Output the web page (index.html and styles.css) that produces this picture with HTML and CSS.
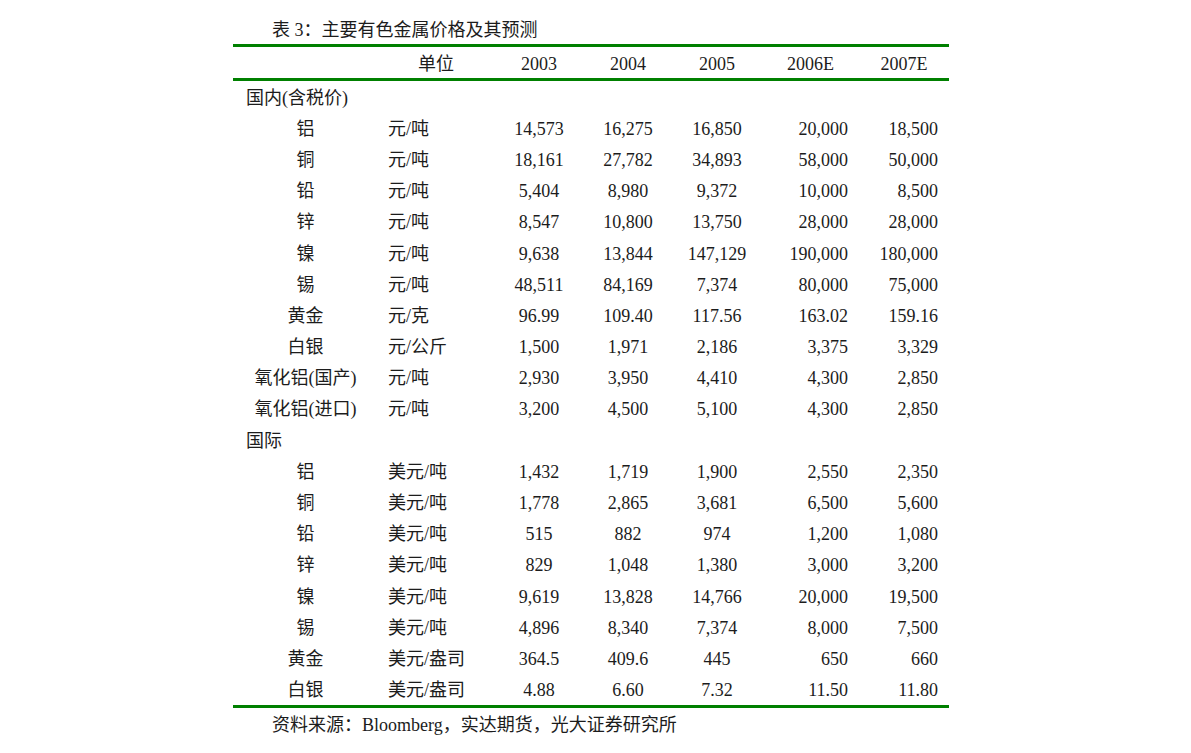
FILE: index.html
```html
<!DOCTYPE html>
<html lang="zh-CN">
<head>
<meta charset="utf-8">
<title>表 3：主要有色金属价格及其预测</title>
<link rel="stylesheet" href="styles.css">
</head>
<body>
<div class="page">
  <div class="caption">表 3：主要有色金属价格及其预测</div>
  <div class="table">
    <div class="row head">
      <div class="c name"></div>
      <div class="c unit-h">单位</div>
      <div class="c yr">2003</div>
      <div class="c yr">2004</div>
      <div class="c yr">2005</div>
      <div class="c yr">2006E</div>
      <div class="c yr">2007E</div>
    </div>
    <div class="row section"><div class="sec">国内(含税价)</div></div>
    <div class="row"><div class="c name">铝</div><div class="c unit">元/吨</div><div class="c num">14,573</div><div class="c num">16,275</div><div class="c num">16,850</div><div class="c num r">20,000</div><div class="c num r">18,500</div></div>
    <div class="row"><div class="c name">铜</div><div class="c unit">元/吨</div><div class="c num">18,161</div><div class="c num">27,782</div><div class="c num">34,893</div><div class="c num r">58,000</div><div class="c num r">50,000</div></div>
    <div class="row"><div class="c name">铅</div><div class="c unit">元/吨</div><div class="c num">5,404</div><div class="c num">8,980</div><div class="c num">9,372</div><div class="c num r">10,000</div><div class="c num r">8,500</div></div>
    <div class="row"><div class="c name">锌</div><div class="c unit">元/吨</div><div class="c num">8,547</div><div class="c num">10,800</div><div class="c num">13,750</div><div class="c num r">28,000</div><div class="c num r">28,000</div></div>
    <div class="row"><div class="c name">镍</div><div class="c unit">元/吨</div><div class="c num">9,638</div><div class="c num">13,844</div><div class="c num">147,129</div><div class="c num r">190,000</div><div class="c num r">180,000</div></div>
    <div class="row"><div class="c name">锡</div><div class="c unit">元/吨</div><div class="c num">48,511</div><div class="c num">84,169</div><div class="c num">7,374</div><div class="c num r">80,000</div><div class="c num r">75,000</div></div>
    <div class="row"><div class="c name">黄金</div><div class="c unit">元/克</div><div class="c num">96.99</div><div class="c num">109.40</div><div class="c num">117.56</div><div class="c num r">163.02</div><div class="c num r">159.16</div></div>
    <div class="row"><div class="c name">白银</div><div class="c unit">元/公斤</div><div class="c num">1,500</div><div class="c num">1,971</div><div class="c num">2,186</div><div class="c num r">3,375</div><div class="c num r">3,329</div></div>
    <div class="row"><div class="c name">氧化铝(国产)</div><div class="c unit">元/吨</div><div class="c num">2,930</div><div class="c num">3,950</div><div class="c num">4,410</div><div class="c num r">4,300</div><div class="c num r">2,850</div></div>
    <div class="row"><div class="c name">氧化铝(进口)</div><div class="c unit">元/吨</div><div class="c num">3,200</div><div class="c num">4,500</div><div class="c num">5,100</div><div class="c num r">4,300</div><div class="c num r">2,850</div></div>
    <div class="row section"><div class="sec">国际</div></div>
    <div class="row"><div class="c name">铝</div><div class="c unit">美元/吨</div><div class="c num">1,432</div><div class="c num">1,719</div><div class="c num">1,900</div><div class="c num r">2,550</div><div class="c num r">2,350</div></div>
    <div class="row"><div class="c name">铜</div><div class="c unit">美元/吨</div><div class="c num">1,778</div><div class="c num">2,865</div><div class="c num">3,681</div><div class="c num r">6,500</div><div class="c num r">5,600</div></div>
    <div class="row"><div class="c name">铅</div><div class="c unit">美元/吨</div><div class="c num">515</div><div class="c num">882</div><div class="c num">974</div><div class="c num r">1,200</div><div class="c num r">1,080</div></div>
    <div class="row"><div class="c name">锌</div><div class="c unit">美元/吨</div><div class="c num">829</div><div class="c num">1,048</div><div class="c num">1,380</div><div class="c num r">3,000</div><div class="c num r">3,200</div></div>
    <div class="row"><div class="c name">镍</div><div class="c unit">美元/吨</div><div class="c num">9,619</div><div class="c num">13,828</div><div class="c num">14,766</div><div class="c num r">20,000</div><div class="c num r">19,500</div></div>
    <div class="row"><div class="c name">锡</div><div class="c unit">美元/吨</div><div class="c num">4,896</div><div class="c num">8,340</div><div class="c num">7,374</div><div class="c num r">8,000</div><div class="c num r">7,500</div></div>
    <div class="row"><div class="c name">黄金</div><div class="c unit">美元/盎司</div><div class="c num">364.5</div><div class="c num">409.6</div><div class="c num">445</div><div class="c num r">650</div><div class="c num r">660</div></div>
    <div class="row last"><div class="c name">白银</div><div class="c unit">美元/盎司</div><div class="c num">4.88</div><div class="c num">6.60</div><div class="c num">7.32</div><div class="c num r">11.50</div><div class="c num r">11.80</div></div>
  </div>
  <div class="source">资料来源：Bloomberg，实达期货，光大证券研究所</div>
</div>
</body>
</html>
```

FILE: styles.css
```css
html, body {
  margin: 0;
  padding: 0;
  background: #ffffff;
}

body {
  color: #1c1c1c;
  font-family: "Liberation Serif", "Noto Sans CJK SC", serif;
  font-size: 18px;
}

.page {
  width: 716px;
  margin-left: 233px;
  padding-top: 18px;
}

.caption {
  margin-left: 39px;
  height: 22px;
  line-height: 24px;
  margin-bottom: 4px;
}

.table {
  border-bottom: 3px solid #008000;
}

.row {
  display: grid;
  grid-template-columns: 145px 116px 90px 88px 90px 97px 90px;
  height: 31.2px;
  align-items: center;
  line-height: 22px;
}

.row.head {
  height: 31px;
  border-top: 3px solid #008000;
  border-bottom: 3px solid #008000;
}

.row.section {
  display: flex;
}

.c,
.sec {
  padding-top: 2px;
}

.sec {
  padding-left: 13px;
}

.c {
  white-space: nowrap;
}

.name {
  text-align: center;
}

.unit-h {
  text-align: center;
}

.unit {
  padding-left: 10px;
}

.yr {
  text-align: center;
}

.num {
  text-align: center;
  font-variant-numeric: tabular-nums;
}

.num.r {
  text-align: right;
  padding-right: 11px;
}

.source {
  margin-top: 5px;
  margin-left: 39px;
  height: 22px;
  line-height: 24px;
}
```
